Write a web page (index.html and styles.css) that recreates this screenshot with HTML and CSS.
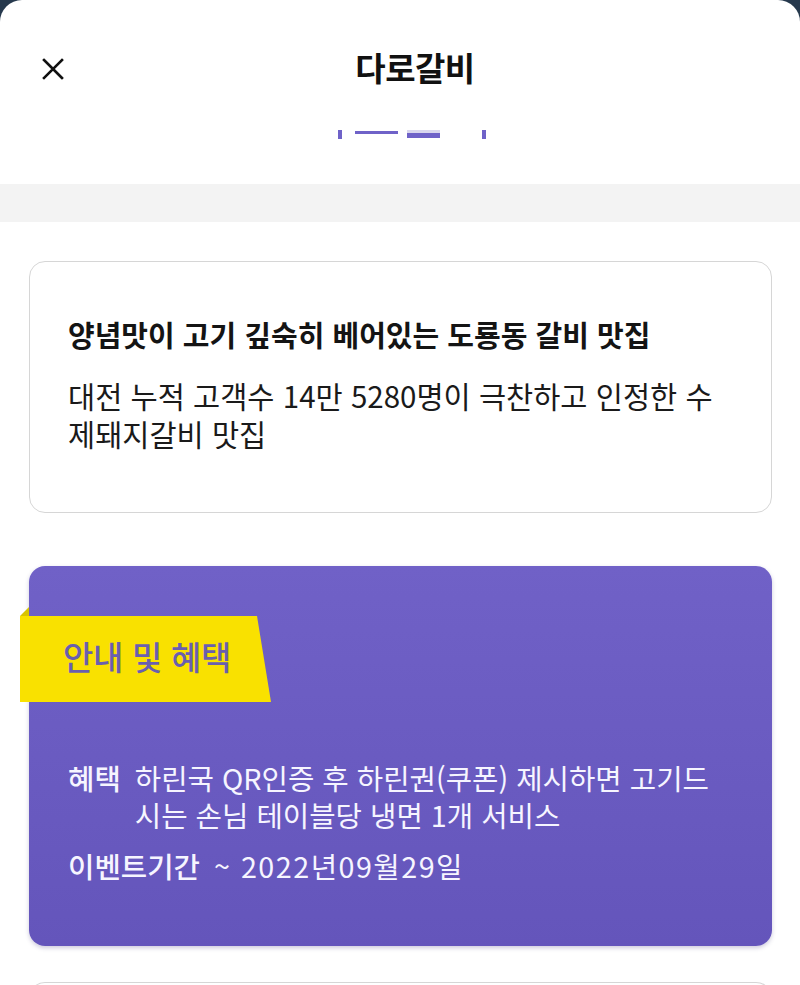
FILE: index.html
```html
<!DOCTYPE html>
<html lang="ko">
<head>
<meta charset="utf-8">
<link rel="stylesheet" href="styles.css">
</head>
<body>
<div class="sheet">
  <header class="topbar">
    <button class="close" aria-label="닫기">
      <svg width="24" height="24" viewBox="0 0 24 24"><path d="M3 3L21 21M21 3L3 21" stroke="#111" stroke-width="2.6" stroke-linecap="square" fill="none"/></svg>
    </button>
    <h1 class="title">다로갈비</h1>
    <span class="spacer"></span>
  </header>
  <div class="peek">
    <svg width="800" height="64" viewBox="0 0 800 64">
      <rect x="338" y="10" width="4" height="9" fill="#6f62c8"/>
      <rect x="355" y="11" width="43" height="3" fill="#6f62c8"/>
      <rect x="407" y="10" width="33" height="3" fill="#d9d6ee"/>
      <rect x="407" y="13" width="33" height="5" fill="#6f62c8"/>
      <rect x="482" y="10" width="4" height="9" fill="#6f62c8"/>
    </svg>
  </div>
  <div class="band"></div>
  <main class="content">
    <section class="card intro">
      <h2 class="intro-title">양념맛이 고기 깊숙히 베어있는 도룡동 갈비 맛집</h2>
      <p class="intro-body">대전 누적 고객수 14만 5280명이 극찬하고 인정한 수<br>제돼지갈비 맛집</p>
    </section>
    <section class="card benefit">
      <div class="tag">
        <svg class="tag-bg" width="251" height="96" viewBox="0 0 251 96">
          <polygon points="0,9 9,0 9,9" fill="#d8c400"/>
          <polygon points="0,9 237,9 251,95 0,95" fill="#f9e100"/>
        </svg>
        <span class="tag-text">안내 및 혜택</span>
      </div>
      <dl class="info">
        <dt>혜택</dt>
        <dd><span class="line">하린국 QR인증 후 하린권(쿠폰) 제시하면 고기드</span><span class="line">시는 손님 테이블당 냉면 1개 서비스</span></dd>
      </dl>
      <dl class="info period">
        <dt>이벤트기간</dt>
        <dd>~ 2022년09월29일</dd>
      </dl>
    </section>
    <section class="card next"></section>
  </main>
</div>
</body>
</html>
```
FILE: styles.css
```css
* { box-sizing: border-box; }
html, body {
  margin: 0;
  padding: 0;
  background: #26394d;
  height: 985px;
  overflow: hidden;
}
body {
  font-family: "Noto Sans CJK KR", "Noto Sans", sans-serif;
  color: #111;
}
.sheet {
  background: #fff;
  border-radius: 22px 22px 0 0;
  min-height: 985px;
  overflow: hidden;
}
.topbar {
  height: 120px;
  display: grid;
  grid-template-columns: 1fr auto 1fr;
  align-items: start;
  padding-top: 44px;
}
.close {
  justify-self: start;
  margin-left: 41px;
  margin-top: 13px;
  width: 24px;
  height: 24px;
  padding: 0;
  border: 0;
  background: none;
  display: flex;
}
.title {
  margin: 0 0 0 30px;
  font-size: 33px;
  line-height: 46px;
  font-weight: 700;
  letter-spacing: -0.5px;
  color: #111;
}
.peek {
  height: 64px;
  display: flex;
}
.band {
  height: 38px;
  background: #f3f3f3;
}
.content {
  padding: 39px 28px 0 29px;
  display: flex;
  flex-direction: column;
}
.card {
  border-radius: 16px;
}
.intro {
  border: 1.5px solid #d6d6d6;
  padding: 53px 20px 56px 38px;
  height: 252px;
}
.intro-title {
  margin: 0;
  font-size: 29px;
  line-height: 38px;
  font-weight: 700;
  letter-spacing: 0;
  color: #141414;
}
.intro-body {
  margin: 23px 0 0;
  font-size: 29.5px;
  line-height: 38px;
  font-weight: 400;
  letter-spacing: 0;
  color: #1a1a1a;
  white-space: nowrap;
}
.benefit {
  margin-top: 53px;
  height: 380px;
  background: linear-gradient(180deg, #7061c7 0%, #6455bb 100%);
  box-shadow: 0 2px 4px rgba(60, 50, 120, 0.25);
  padding: 41px 20px 0 39px;
  color: #f6f5ff;
}
.tag {
  position: relative;
  margin-left: -48px;
  width: 251px;
  height: 95px;
  display: flex;
  align-items: flex-end;
}
.tag-bg {
  position: absolute;
  left: 0;
  top: 0;
}
.tag-text {
  position: relative;
  height: 86px;
  display: flex;
  align-items: center;
  padding-left: 43px;
  padding-bottom: 6px;
  font-size: 33px;
  font-weight: 500;
  letter-spacing: -0.3px;
  color: #6a5fae;
}
.info {
  margin: 0;
  display: grid;
  grid-template-columns: auto 1fr;
  font-size: 28.7px;
  line-height: 37px;
  letter-spacing: 0;
  white-space: nowrap;
}
.info dt {
  font-weight: 500;
  padding-right: 14px;
}
.info dd {
  margin: 0;
  font-weight: 400;
}
.line {
  display: block;
  height: 37px;
}
.benefit .info:first-of-type {
  margin-top: 57px;
}
.period {
  margin-top: 14px;
}
.period dt {
  padding-right: 14px;
}
.period dd {
  letter-spacing: 1.5px;
}
.next {
  margin-top: 36px;
  border: 1.5px solid #d6d6d6;
  border-bottom: 0;
  height: 40px;
}
```
